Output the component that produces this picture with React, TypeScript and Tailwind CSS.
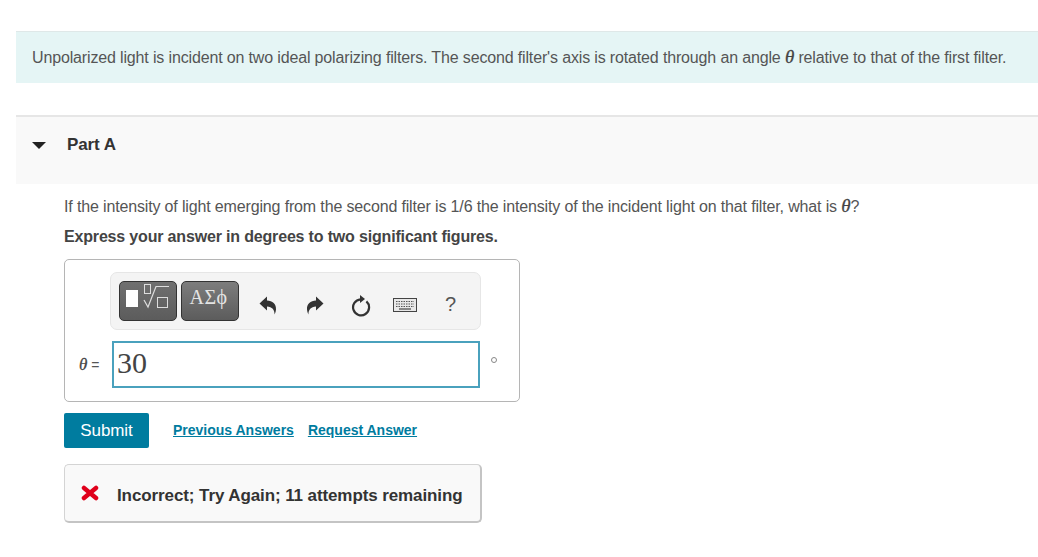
const sans = "font-['Liberation_Sans',Arial,sans-serif]";

function Theta() {
  return <i className="font-['Liberation_Serif',serif] text-[19px] leading-none text-[#444] [-webkit-text-stroke:0.3px_#444]">θ</i>;
}

function UndoIcon({ flip }: { flip?: boolean }) {
  return (
    <svg width="18" height="19" viewBox="0 0 18 19" className={flip ? "-scale-x-100" : ""}>
      <path
        d="M0.5 7.5 L8 0.5 V4.4 C13.5 4.6 17.4 7.6 17 13.5 C16.9 15.2 16.4 17 15.6 18.5 C15.6 14 13.2 10.8 8 10.6 V14.5 Z"
        fill="#333"
      />
    </svg>
  );
}

function ResetIcon() {
  return (
    <svg width="20" height="23" viewBox="0 0 20 23">
      <path d="M9.5 5.4 A8 8 0 1 0 15.4 7.4" fill="none" stroke="#333" strokeWidth="2.2" />
      <path d="M9 1 L14 5 L9 9 Z" fill="#333" />
    </svg>
  );
}

function KeyboardIcon() {
  return (
    <svg width="24" height="14" viewBox="0 0 24 14">
      <rect x="0.5" y="0.5" width="23" height="13" fill="#e8e8e8" stroke="#444" />
      <path d="M3 3.5 H21 M3 6 H21 M3 8.5 H21" stroke="#555" strokeWidth="1.2" strokeDasharray="1.5 1" />
      <path d="M6 11 H18" stroke="#444" strokeWidth="1.2" />
    </svg>
  );
}

function TemplateIcon() {
  return (
    <svg width="56" height="38" viewBox="0 0 56 38">
      <rect x="6" y="8" width="12" height="17" fill="#fff" />
      <rect x="24.5" y="2.5" width="6" height="9" fill="none" stroke="#ddd" />
      <path d="M24 18 L28 25 L36 4.5 H49" fill="none" stroke="#ddd" strokeWidth="1.2" />
      <rect x="37.5" y="15.5" width="10" height="10" fill="none" stroke="#ddd" />
    </svg>
  );
}

export default function App() {
  return (
    <div className={`${sans} w-[1038px] h-[557px] bg-white overflow-hidden pt-[31px] text-[#444]`}>
      <div className="ml-4 h-[52px] bg-[#e5f5f5] border-t border-[#dfe8e8] pl-4 flex items-center text-[16px] tracking-[-0.15px] text-[#555]">
        <p className="whitespace-nowrap">
          Unpolarized light is incident on two ideal polarizing filters. The second filter's axis is rotated through an angle <Theta /> relative to that of the first filter.
        </p>
      </div>

      <div className="ml-4 mt-8 h-[69px] bg-[#f9f9f9] border-t-2 border-[#e6e6e6] flex items-start pt-[18px]">
        <div className="w-[51px] pl-4 pt-[7px]">
          <div className="w-0 h-0 border-l-[7px] border-r-[7px] border-t-[7px] border-l-transparent border-r-transparent border-t-[#222]" />
        </div>
        <h2 className="font-bold text-[17px] tracking-[-0.1px] text-[#333] leading-[20px]">Part A</h2>
      </div>

      <div className="ml-16 mt-3">
        <p className="text-[16px] tracking-[-0.15px] text-[#555] leading-[20px] whitespace-nowrap">
          If the intensity of light emerging from the second filter is 1/6 the intensity of the incident light on that filter, what is <Theta />?
        </p>
        <p className="mt-[10px] font-bold text-[16px] tracking-[-0.17px] text-[#444] leading-[20px]">
          Express your answer in degrees to two significant figures.
        </p>

        <div className="mt-[12px] w-[456px] h-[143px] border border-[#b5b5b5] rounded-[5px] pt-3 pl-[45px]">
          <div className="w-[371px] h-[58px] bg-[#f4f4f4] border border-[#e6e6e6] rounded-[7px] flex items-start pl-2 pt-2">
            <button className="w-[58px] h-10 rounded-[5px] border border-[#333] bg-gradient-to-b from-[#707070] to-[#5c5c5c] flex items-center justify-center">
              <TemplateIcon />
            </button>
            <button className="ml-[4px] w-[58px] h-10 rounded-[5px] border border-[#333] bg-gradient-to-b from-[#7d7d7d] to-[#5c5c5c] font-['Liberation_Serif',serif] text-[20px] leading-[30px] text-[#e4e4e4] flex justify-center tracking-[0.5px] pr-[3px]">
              ΑΣϕ
            </button>
            <div className="flex items-center h-10 mt-[4px]">
              <span className="ml-[20px]"><UndoIcon /></span>
              <span className="ml-[29px]"><UndoIcon flip /></span>
              <span className="ml-[27px]"><ResetIcon /></span>
              <span className="ml-[22px]"><KeyboardIcon /></span>
              <span className="ml-[28px] -mt-[2px] text-[20px] text-[#555]">?</span>
            </div>
          </div>

          <div className="flex items-center mt-[11px] -ml-[45px]">
            <span className="w-[47px] pl-[14px] text-[14px] text-[#555] whitespace-nowrap">
              <i className="font-['Liberation_Serif',serif] text-[17px] text-[#444] [-webkit-text-stroke:0.3px_#444]">θ</i> =
            </span>
            <div className="w-[368px] h-[47px] border-2 border-[#4aa1bd] flex items-center pl-[3px] pb-[4px] font-['Liberation_Serif',serif] text-[30px] text-[#444]">
              30
            </div>
            <span className="ml-[11px] -mt-2.5 w-[6px] h-[6px] rounded-full border border-[#888]" />
          </div>
        </div>

        <div className="mt-[11px] flex items-center">
          <button className="w-[85px] h-[35px] pt-[1px] bg-[#007c9f] rounded-[2px] text-white text-[17px] tracking-[-0.1px]">Submit</button>
          <a className="ml-6 font-bold text-[14px] text-[#007c9f] underline">Previous Answers</a>
          <a className="ml-[14px] font-bold text-[14px] text-[#007c9f] underline">Request Answer</a>
        </div>

        <div className="mt-4 w-[418px] h-[59px] bg-[#f9f9f9] border border-[#d4d4d4] border-r-2 border-b-2 border-r-[#c4c4c4] border-b-[#c4c4c4] rounded-[5px] flex items-center pl-[16px]">
          <svg width="18" height="16" viewBox="0 0 18 16">
            <path d="M3 3 L15 13 M15 3 L3 13" stroke="#e0001b" strokeWidth="4.5" strokeLinecap="round" fill="none" />
          </svg>
          <span className="ml-[18px] mt-[5px] font-bold text-[17px] tracking-[-0.1px] text-[#333]">
            Incorrect; Try Again; 11 attempts remaining
          </span>
        </div>
      </div>
    </div>
  );
}
